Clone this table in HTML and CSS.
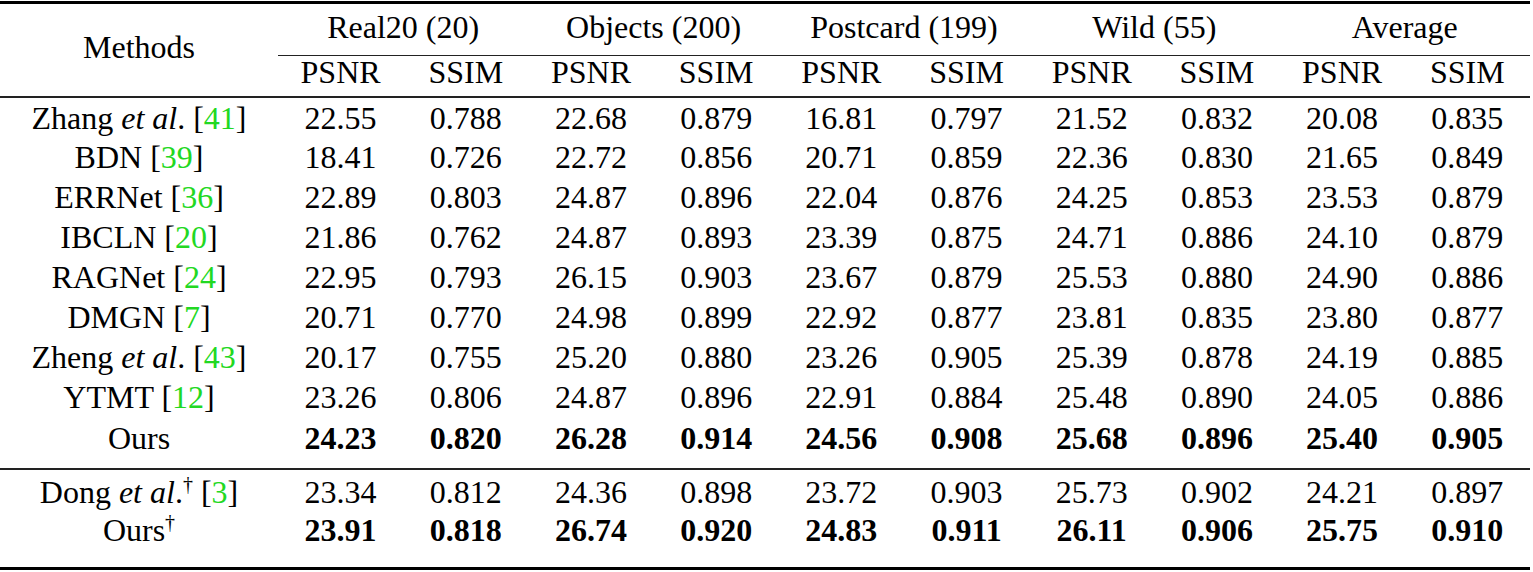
FILE: index.html
```html
<!DOCTYPE html>
<html lang="en">
<head>
  <meta charset="UTF-8">
  <title>Reflection Removal Results</title>
  <link rel="stylesheet" href="styles.css">
</head>
<body>
  <table class="results">
    <colgroup>
      <col class="col-method">
      <col span="10" class="col-metric">
    </colgroup>
    <thead>
      <tr class="groups">
        <th rowspan="2" class="method-head">Methods</th>
        <th colspan="2" class="group">Real20 (20)</th>
        <th colspan="2" class="group">Objects (200)</th>
        <th colspan="2" class="group">Postcard (199)</th>
        <th colspan="2" class="group">Wild (55)</th>
        <th colspan="2" class="group">Average</th>
      </tr>
      <tr class="metrics">
        <th>PSNR</th><th>SSIM</th>
        <th>PSNR</th><th>SSIM</th>
        <th>PSNR</th><th>SSIM</th>
        <th>PSNR</th><th>SSIM</th>
        <th>PSNR</th><th>SSIM</th>
      </tr>
    </thead>

    <tbody class="main">
      <tr>
        <td>Zhang <i>et al</i>. [<span class="cite">41</span>]</td>
        <td>22.55</td><td>0.788</td><td>22.68</td><td>0.879</td><td>16.81</td><td>0.797</td><td>21.52</td><td>0.832</td><td>20.08</td><td>0.835</td>
      </tr>
      <tr>
        <td>BDN [<span class="cite">39</span>]</td>
        <td>18.41</td><td>0.726</td><td>22.72</td><td>0.856</td><td>20.71</td><td>0.859</td><td>22.36</td><td>0.830</td><td>21.65</td><td>0.849</td>
      </tr>
      <tr>
        <td>ERRNet [<span class="cite">36</span>]</td>
        <td>22.89</td><td>0.803</td><td>24.87</td><td>0.896</td><td>22.04</td><td>0.876</td><td>24.25</td><td>0.853</td><td>23.53</td><td>0.879</td>
      </tr>
      <tr>
        <td>IBCLN [<span class="cite">20</span>]</td>
        <td>21.86</td><td>0.762</td><td>24.87</td><td>0.893</td><td>23.39</td><td>0.875</td><td>24.71</td><td>0.886</td><td>24.10</td><td>0.879</td>
      </tr>
      <tr>
        <td>RAGNet [<span class="cite">24</span>]</td>
        <td>22.95</td><td>0.793</td><td>26.15</td><td>0.903</td><td>23.67</td><td>0.879</td><td>25.53</td><td>0.880</td><td>24.90</td><td>0.886</td>
      </tr>
      <tr>
        <td>DMGN [<span class="cite">7</span>]</td>
        <td>20.71</td><td>0.770</td><td>24.98</td><td>0.899</td><td>22.92</td><td>0.877</td><td>23.81</td><td>0.835</td><td>23.80</td><td>0.877</td>
      </tr>
      <tr>
        <td>Zheng <i>et al</i>. [<span class="cite">43</span>]</td>
        <td>20.17</td><td>0.755</td><td>25.20</td><td>0.880</td><td>23.26</td><td>0.905</td><td>25.39</td><td>0.878</td><td>24.19</td><td>0.885</td>
      </tr>
      <tr>
        <td>YTMT [<span class="cite">12</span>]</td>
        <td>23.26</td><td>0.806</td><td>24.87</td><td>0.896</td><td>22.91</td><td>0.884</td><td>25.48</td><td>0.890</td><td>24.05</td><td>0.886</td>
      </tr>
      <tr class="best last">
        <td class="plain">Ours</td>
        <td>24.23</td><td>0.820</td><td>26.28</td><td>0.914</td><td>24.56</td><td>0.908</td><td>25.68</td><td>0.896</td><td>25.40</td><td>0.905</td>
      </tr>
    </tbody>

    <tbody class="extra">
      <tr>
        <td>Dong <i>et al</i>.<sup>&dagger;</sup> [<span class="cite">3</span>]</td>
        <td>23.34</td><td>0.812</td><td>24.36</td><td>0.898</td><td>23.72</td><td>0.903</td><td>25.73</td><td>0.902</td><td>24.21</td><td>0.897</td>
      </tr>
      <tr class="best last">
        <td class="plain">Ours<sup>&dagger;</sup></td>
        <td>23.91</td><td>0.818</td><td>26.74</td><td>0.920</td><td>24.83</td><td>0.911</td><td>26.11</td><td>0.906</td><td>25.75</td><td>0.910</td>
      </tr>
    </tbody>
  </table>
</body>
</html>
```

FILE: styles.css
```css
body {
  margin: 0;
  background: #fff;
  color: #000;
  font-family: "Liberation Serif", "Times New Roman", serif;
}

.results {
  width: 1530px;
  margin-top: 1px;
  table-layout: fixed;
  border-collapse: collapse;
  border-top: 3px solid #000;
  border-bottom: 3px solid #000;
  font-size: 32px;
}

.col-method {
  width: 278px;
}

.results th,
.results td {
  box-sizing: border-box;
  padding: 0;
  text-align: center;
  font-weight: normal;
  line-height: 1;
  white-space: nowrap;
}

/* header */
.groups th {
  height: 53px;
  padding-bottom: 6px;
}

.group {
  border-bottom: 1px solid #222;
}

.method-head {
  vertical-align: middle;
}

.metrics th {
  height: 39px;
  padding-bottom: 8px;
}

thead {
  border-bottom: 2px solid #222;
}

/* body rows */
.results tbody td {
  height: 40px;
}

.main tr.last td {
  height: 52px;
  padding-bottom: 10px;
}

.extra tr:first-child td {
  height: 42px;
  padding-top: 2px;
}

.extra tr.last td {
  height: 57px;
  padding-bottom: 17px;
}

.main {
  border-bottom: 2px solid #222;
}

.best td {
  font-weight: bold;
}

.best td.plain {
  font-weight: normal;
}

.cite {
  color: #22d822;
}

sup {
  font-size: 20px;
  line-height: 0;
  vertical-align: 12px;
}
```
